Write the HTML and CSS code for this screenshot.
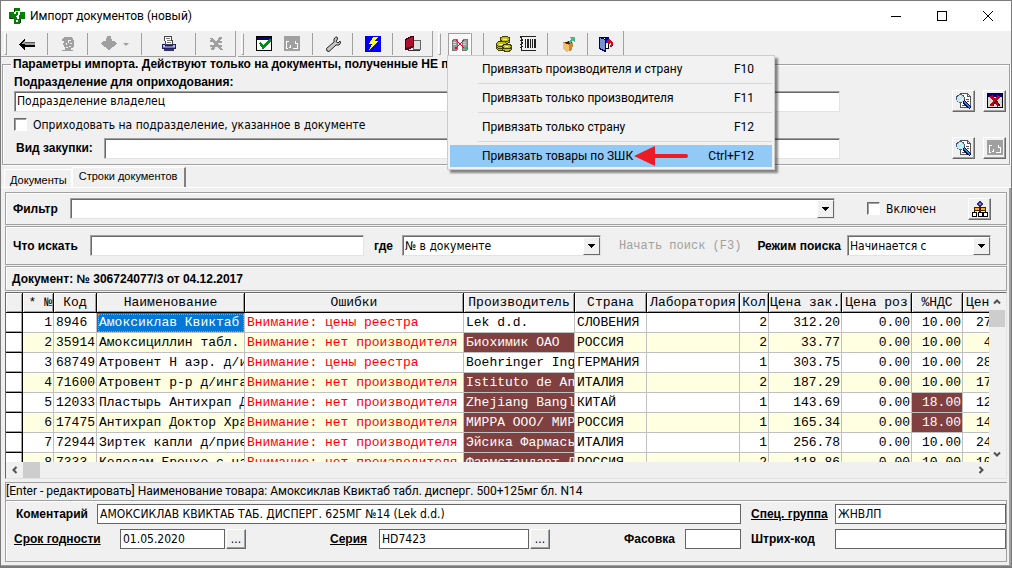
FILE: index.html
```html
<!DOCTYPE html>
<html lang="ru">
<head>
<meta charset="utf-8">
<title>Импорт документов (новый)</title>
<link rel="stylesheet" href="styles.css">
</head>
<body>
<svg class="sprite" aria-hidden="true">
  <symbol id="i-gray" viewBox="0 0 16 16"><path fill="#a0a0a0" d="M0 0h16v15H0z"/><path fill="#fff" d="M2 5h1v7h-1zM3 5h2v1h-2zM2 12h2v1h-2zM11 5h1v3h-1zM12 7h2v1h-2zM13 8h1v5h-1zM9 12h4v1h-4zM5 11h2v1h-2zM6 9h1v2h-1z"/></symbol>
  <symbol id="i-find" viewBox="0 0 16 16"><path fill="#fff" stroke="#555" d="M4.500.5h7l3 3v11h-10z"/><path stroke="#555" fill="none" d="M11.500.5v3h3M10 6.500h3M11 8.500h2M6 12.500h3"/><circle cx="4.500" cy="5.500" r="4" fill="#b8ecf4" stroke="#557"/><path stroke="#fff" d="M3 5l2-2M4 8l3-3"/><path stroke="#000050" stroke-width="3.400" d="M7.500 8.500l7 6.500"/><path stroke="#1c8ce0" stroke-width="1.600" d="M8 8.500l6 6"/></symbol>
</svg>
<div class="window">
  <header class="titlebar">
    <svg class="logo" viewBox="0 0 16 16"><path fill="#008000" d="M5 0h6v4h5v7h-5v5H5v-5H0V4h5z"/><path fill="none" stroke="#fff" stroke-width="1.200" d="M6 5.500V3.500h4v3L7.500 8.500h2V10H7.500M8 11.500v2"/><path stroke="#003000" d="M5 1v3M11 11v4M1 10.500h3"/></svg>
    <h1>Импорт документов (новый)</h1>
    <button class="cap" aria-label="Свернуть"><svg viewBox="0 0 10 10"><path d="M0 5.500h10"/></svg></button>
    <button class="cap" aria-label="Развернуть"><svg viewBox="0 0 10 10"><path d="M.5.5h9v9h-9z"/></svg></button>
    <button class="cap" aria-label="Закрыть"><svg class="smooth" viewBox="0 0 10 10"><path d="M0 0l10 10M10 0L0 10"/></svg></button>
  </header>

  <div class="toolbars">
    <div class="bar">
      <div class="seg"><button aria-label="Назад"><svg viewBox="0 0 16 16"><path fill="#a0a0a0" d="M0 8l6-5v3h10v4H6v3z"/><path fill="#000" d="M0 8l6-5v1L2 8h4v1h10v2H6v3L0 9z"/><path fill="#555" d="M6 6h10v1H6z"/></svg></button></div>
      <div class="seg"><button aria-label="Производитель"><svg viewBox="0 0 16 16"><path fill="#a0a0a0" d="M4 1h7l2 1 1 3v5l-2 2h-1v2h2v1H2v-1h3v-2L4 11V9H3V7h1V5H2V3z"/><path fill="#f0f0f0" d="M8 4h3v1H9v2H8zM10 7h2v1h-2zM6 7h1v2H6zM9 10h2v1H9zM6 11h2v1H6z"/></svg></button></div>
      <div class="seg wide"><button aria-label="Загрузить"><svg viewBox="0 0 16 16"><path fill="#a0a0a0" d="M6 0h4l1 5h3l2 3-4 3-2 1-2 3-2-3-2-1-4-3 2-3h3z"/></svg></button><button class="drop" aria-label="Варианты загрузки"></button></div>
      <div class="seg wide"><button aria-label="Печать"><svg viewBox="0 0 16 16"><path fill="#fff" stroke="#444" d="M3.500.5h7l1 8h-7z"/><path stroke="#777" d="M5 2.500h4M6 4.500h4M6 6.500h4"/><path fill="#7878c8" stroke="#202060" d="M1.500 8.500h2l1 1h7l1-1h2v4h-13z"/><path fill="#c0c0f0" d="M2 9h2v2h8V9h2v2H2z"/><path fill="#30307a" d="M3 13h10v2H3z"/></svg></button></div>
      <div class="seg"><button aria-label="Удалить"><svg viewBox="0 0 16 16"><path stroke="#a0a0a0" stroke-width="2.600" d="M3 2l11 12M13 1L4 14"/><path stroke="#a0a0a0" stroke-width="1.500" d="M2 5h3M11 6h3M2 10h12"/></svg></button></div>
    </div>
    <div class="bar">
      <div class="seg pair"><button aria-label="Отметить"><svg viewBox="0 0 16 16"><path fill="#fff" stroke="#000" d="M.5.5h15v14H.5z"/><path fill="#000080" d="M1 1h14v3H1z"/><path fill="#008a1c" d="M3 7l2-1 2 3 6-6h2v2L7 14z"/></svg></button><button aria-label="Снять отметку"><svg><use href="#i-gray"/></svg></button></div>
      <div class="seg"><button aria-label="Настройка"><svg class="smooth" viewBox="0 0 16 16"><path fill="#c8c8c8" stroke="#222" d="M10.500 1.200L9 3v3l-7.500 6.500.5 2.500 2 .5L11 9h3l1.500-2-.5-2-2 2-2-1.500L12.500 3l-.5-2z"/></svg></button></div>
      <div class="seg"><button aria-label="Выполнить"><svg viewBox="0 0 16 16"><path fill="#0000f0" d="M0 0h16v16H0z"/><path fill="#ffff20" d="M8 1h5l-3 4h4l-10 9 3-6H4z"/></svg></button></div>
      <div class="seg"><button aria-label="Справочник"><svg viewBox="0 0 16 16"><path fill="#e0e0e0" stroke="#666" d="M8.500 4.500h7v9h-7z"/><path fill="#b01030" stroke="#400010" d="M.5 3.500l6-3h2v10l-6 3h-2z"/><path fill="#600018" d="M1 12l8-3v2l-6 3H1z"/><path fill="#333" d="M3 14h12v1H3z"/></svg></button></div>
    </div>
    <div class="bar">
      <div class="seg tight">
        <button class="pressed" aria-label="Привязать" aria-haspopup="menu" aria-expanded="true"><svg viewBox="0 0 16 16"><path fill="#989898" stroke="#777" d="M.5 4.500l2-1h3v10l-1 1h-4zM10.500 4.500l2-1h3v10l-1 1h-4z"/><path fill="#d8d8d8" d="M1 6h3v1H1zM11 6h3v1h-3zM1 8h3v1H1zM11 8h3v1h-3z"/><path stroke="#f00020" stroke-width="1.400" d="M4 4l8 8M12 4l-8 8"/><path fill="#f00020" d="M3 11h2v2H3z"/><path fill="#0c4" d="M13 11h2v2h-2z"/></svg></button>
        <div class="menu" role="menu">
          <button role="menuitem"><span>Привязать производителя и страну</span><kbd>F10</kbd></button>
          <hr>
          <button role="menuitem"><span>Привязать только производителя</span><kbd>F11</kbd></button>
          <hr>
          <button role="menuitem"><span>Привязать только страну</span><kbd>F12</kbd></button>
          <hr>
          <button role="menuitem" class="hot"><span>Привязать товары по ЗШК</span><kbd>Ctrl+F12</kbd><svg class="pointer" viewBox="0 0 54 20"><path fill="#ed1c24" d="M0 10L21 0v8h31a2 2 0 010 4H21v8z"/></svg></button>
        </div>
      </div>
      <div class="seg spacer"></div>
      <div class="seg pair"><button aria-label="Цены"><svg viewBox="0 0 16 16"><g fill="#c8c010" stroke="#404000"><ellipse cx="9" cy="5" rx="5" ry="2.500"/><ellipse cx="9" cy="3" rx="5" ry="2.500"/><ellipse cx="5.500" cy="12" rx="5" ry="2.500"/><ellipse cx="5.500" cy="10" rx="5" ry="2.500"/><ellipse cx="5.500" cy="8" rx="5" ry="2.500"/><ellipse cx="11" cy="13" rx="4.500" ry="2.300"/><ellipse cx="11" cy="10.500" rx="4.500" ry="2.300"/></g><path stroke="#ffff80" d="M7 3h4M3 8h4M9 10.500h3"/></svg></button><button aria-label="Штрих-коды"><svg viewBox="0 0 16 16"><path fill="#222" d="M0 0h16v1H2v2h1v2H2v1h1v2H2v2h1v1H2v3h14v1H1v-3H0v-1h1V9H0V8h1V5H0V4h1V2H0zM5 3h1v9H5zM7 3h2v9H7zM10 3h1v9h-1zM12 3h1v9h-1zM14 3h2v9h-2z"/></svg></button></div>
      <div class="seg"><button aria-label="Товары"><svg viewBox="0 0 16 16"><path fill="#c88838" d="M3 6l8-1 2 3-1 6-6 2-3-3z"/><path fill="#f0c070" d="M3 7l6 2v6l-3 1-3-4z"/><path fill="#402008" d="M4 6l7-1 1 2-5 1z"/><path fill="#48b888" d="M8 6l3-3-2-2h6v5l-2-1-3 2z"/></svg></button></div>
      <div class="seg slim"><button aria-label="Выход"><svg viewBox="0 0 16 16"><path fill="#fff" stroke="#000" d="M1.500 1.500h9v11h-9z"/><path fill="#7890d0" stroke="#000060" d="M1.500 1.500l6 2v12l-6-3z"/><path fill="#0000c0" d="M7 2h4v5H8z"/><path fill="#d00018" d="M8 6l3-4 1 2c3 1 4 4 2 7h-2l1-3-1-1-1 2z"/></svg></button></div>
    </div>
  </div>

  <fieldset class="params">
    <legend>Параметры импорта. Действуют только на документы, полученные НЕ п</legend>
    <label class="bold" for="unit">Подразделение для оприходования:</label>
    <div class="line">
      <input id="unit" class="sunk grow" value="Подразделение владелец">
      <div class="tools"><button class="raised" aria-label="Найти"><svg><use href="#i-find"/></svg></button><button class="raised" aria-label="Очистить"><svg viewBox="0 0 16 16"><path fill="#d8d8d8" stroke="#000" d="M.5.5h15v14H.5z"/><path fill="#000080" d="M1 1h14v3H1z"/><path stroke="#c00018" stroke-width="3" d="M4 3l8 10M12 3L4 13"/><path stroke="#500008" d="M9 7l4 6M6 13l3-5"/></svg></button></div>
    </div>
    <label class="check"><input type="checkbox">Оприходовать на подразделение, указанное в документе</label>
    <div class="line">
      <label class="bold kind" for="kind">Вид закупки:</label>
      <input id="kind" class="sunk grow">
      <div class="tools"><button class="raised" aria-label="Найти"><svg><use href="#i-find"/></svg></button><button class="raised" aria-label="Очистить" disabled><svg><use href="#i-gray"/></svg></button></div>
    </div>
  </fieldset>

  <div class="tabs" role="tablist">
    <button role="tab">Документы</button>
    <button role="tab" class="active" aria-selected="true">Строки документов</button>
  </div>

  <main class="page">
    <div class="panel filter">
      <label class="bold" for="filter">Фильтр</label>
      <span class="combo grow"><select id="filter" class="sunk"><option></option></select></span>
      <label class="check on"><input type="checkbox">Включен</label>
      <button class="raised" aria-label="Структура"><svg viewBox="0 0 16 16"><path fill="#7878e0" stroke="#303080" d="M8 .5L10.500 3 8 5.500 5.500 3z"/><path fill="#ffb020" stroke="#402000" d="M2.500 6.500h11v3h-11z"/><path fill="#402000" d="M7 5h2v6H7zM2 9h1v2H2zM13 9h1v2h-1z"/><path fill="#fff" stroke="#000" d="M.5 11.500h4v4h-4zM6 11.500h4v4H6zM11.500 11.500h4v4h-4z"/></svg></button>
    </div>
    <div class="panel search">
      <label class="bold what" for="what">Что искать</label>
      <input id="what" class="sunk grow">
      <label class="bold" for="where">где</label>
      <span class="combo by"><select id="where" class="sunk"><option>№ в документе</option></select></span>
      <button class="start" disabled>Начать поиск (F3)</button>
      <label class="bold" for="mode">Режим поиска</label>
      <span class="combo mode"><select id="mode" class="sunk"><option>Начинается с</option></select></span>
    </div>
    <div class="panel doc bold">Документ: № 306724077/3 от 04.12.2017</div>

    <div class="grid">
      <div class="view">
        <table>
          <colgroup><col class="c-ind"><col class="c-no"><col class="c-code"><col class="c-name"><col class="c-err"><col class="c-maker"><col class="c-country"><col class="c-lab"><col class="c-qty"><col class="c-buy"><col class="c-sell"><col class="c-vat"><col class="c-last"></colgroup>
          <thead><tr><th></th><th class="num">* №</th><th>Код</th><th>Наименование</th><th>Ошибки</th><th>Производитель</th><th>Страна</th><th>Лаборатория</th><th>Кол</th><th>Цена зак.</th><th>Цена роз</th><th>%НДС</th><th class="left">Цен</th></tr></thead>
          <tbody>
            <tr><td></td><td>1</td><td>8946</td><td class="sel">Амоксиклав Квиктаб</td><td>Внимание: цены реестра</td><td>Lek d.d.</td><td>СЛОВЕНИЯ</td><td></td><td>2</td><td>312.20</td><td>0.00</td><td>10.00</td><td>27</td></tr>
            <tr><td></td><td>2</td><td>35914</td><td>Амоксициллин табл.</td><td>Внимание: нет производителя</td><td class="bad">Биохимик ОАО</td><td>РОССИЯ</td><td></td><td>2</td><td>33.77</td><td>0.00</td><td>10.00</td><td> 4</td></tr>
            <tr><td></td><td>3</td><td>68749</td><td>Атровент Н аэр. д/и</td><td>Внимание: цены реестра</td><td>Boehringer Ing</td><td>ГЕРМАНИЯ</td><td></td><td>1</td><td>303.75</td><td>0.00</td><td>10.00</td><td>28</td></tr>
            <tr><td></td><td>4</td><td>71600</td><td>Атровент р-р д/инга</td><td>Внимание: нет производителя</td><td class="bad">Istituto de An</td><td>ИТАЛИЯ</td><td></td><td>2</td><td>187.29</td><td>0.00</td><td>10.00</td><td>17</td></tr>
            <tr><td></td><td>5</td><td>12033</td><td>Пластырь Антихрап Д</td><td>Внимание: нет производителя</td><td class="bad">Zhejiang Bangl</td><td>КИТАЙ</td><td></td><td>1</td><td>143.69</td><td>0.00</td><td class="bad">18.00</td><td>12</td></tr>
            <tr><td></td><td>6</td><td>17475</td><td>Антихрап Доктор Хра</td><td>Внимание: нет производителя</td><td class="bad">МИРРА ООО/ МИР</td><td>РОССИЯ</td><td></td><td>1</td><td>165.34</td><td>0.00</td><td class="bad">18.00</td><td>14</td></tr>
            <tr><td></td><td>7</td><td>72944</td><td>Зиртек капли д/прие</td><td>Внимание: нет производителя</td><td class="bad">Эйсика Фармась</td><td>ИТАЛИЯ</td><td></td><td>1</td><td>256.78</td><td>0.00</td><td>10.00</td><td>24</td></tr>
            <tr><td></td><td>8</td><td>7333</td><td>Колодам Бронхо с ча</td><td>Внимание: нет производителя</td><td class="bad">Фармстандарт Л</td><td>РОССИЯ</td><td></td><td>2</td><td>118.86</td><td>0.00</td><td>10.00</td><td>10</td></tr>
          </tbody>
        </table>
      </div>
      <div class="vscroll"><button aria-label="Вверх"><svg viewBox="0 0 8 8"><path d="M1 5.500L4 2.500l3 3"/></svg></button><div class="thumb"></div><button aria-label="Вниз"><svg viewBox="0 0 8 8"><path d="M1 2.500l3 3 3-3"/></svg></button></div>
      <div class="hscroll"><button aria-label="Влево"><svg viewBox="0 0 8 8"><path d="M5.500 1l-3 3 3 3"/></svg></button><div class="thumb"></div><button aria-label="Вправо"><svg viewBox="0 0 8 8"><path d="M2.500 1l3 3-3 3"/></svg></button></div>
    </div>

    <div class="status">[Enter - редактировать] Наименование товара: Амоксиклав Квиктаб табл. дисперг. 500+125мг бл. N14</div>

    <div class="details">
      <div class="row">
        <label class="bold l-note" for="note">Коментарий</label><input id="note" class="flat grow" value="АМОКСИКЛАВ КВИКТАБ ТАБ. ДИСПЕРГ. 625МГ №14 (Lek d.d.)">
      </div>
      <div class="row"><a class="bold side" href="#group">Спец. группа</a><input id="group" aria-label="Спец. группа" class="flat grow" value="ЖНВЛП"></div>
      <div class="row">
        <a class="bold l-date" href="#date">Срок годности</a><input id="date" aria-label="Срок годности" class="flat w-date" value="01.05.2020"><button class="raised dots" aria-label="Выбрать дату">...</button>
        <a class="bold l-serial" href="#serial">Серия</a><input id="serial" aria-label="Серия" class="flat w-serial" value="HD7423"><button class="raised dots" aria-label="Выбрать серию">...</button>
        <label class="bold l-pack" for="pack">Фасовка</label><input id="pack" class="flat w-pack">
      </div>
      <div class="row"><label class="bold side" for="bar">Штрих-код</label><input id="bar" class="flat grow"></div>
    </div>
  </main>
</div>
</body>
</html>
```
FILE: styles.css
```css
*, *::before, *::after { box-sizing: border-box; }
body { margin: 0; background: #f0f0f0; color: #000; font: 12px/16px "DejaVu Sans Condensed", "Noto Sans", sans-serif; }
button, input, select { font: inherit; color: inherit; margin: 0; padding: 0; border: 0; border-radius: 0; background: none; outline: 0; }
svg { display: block; width: 16px; height: 16px; fill: none; shape-rendering: crispEdges; }
svg.smooth { shape-rendering: auto; }
.sprite { display: none; }
.bold { font: bold 12px/16px "Liberation Sans", sans-serif; white-space: nowrap; }
.grow { flex: 1; min-width: 0; }
a { color: inherit; }

.window { display: flex; flex-direction: column; height: 100vh; border: 1px solid #7a7a7a; border-bottom-width: 2px; overflow: hidden; }
.titlebar { display: flex; align-items: center; height: 30px; flex: none; padding-left: 8px; background: #fff; }
.titlebar h1 { flex: 1; margin: 0 0 0 5px; font: 12px/16px Roboto, sans-serif; }
.cap { width: 46px; height: 28px; display: grid; place-items: center; }
.cap svg { width: 10px; height: 10px; stroke: #000; }

.toolbars { display: flex; flex: none; height: 26px; }
.bar { display: flex; padding: 2px 0 1px 3px; border-right: 1px solid #a0a0a0; border-bottom: 1px solid #a0a0a0; margin-right: 2px; }
.bar::before { content: ""; width: 3px; border: 1px solid; border-color: #fff #a0a0a0 #a0a0a0 #fff; }
.bar:last-child { border-bottom-color: transparent; }
.seg { display: flex; align-items: center; justify-content: center; width: 40px; }
.seg + .seg { border-left: 1px solid #a0a0a0; }
.seg.wide { width: 54px; }
.seg.pair { width: 68px; gap: 12px; }
.bar:last-child .pair { width: 64px; gap: 8px; }
.seg.tight { position: relative; width: 30px; justify-content: flex-end; }
.seg.spacer { width: 12px; }
.seg.slim { width: 36px; }
.drop { margin-left: 6px; border: 3px solid transparent; border-top-color: #a0a0a0; border-bottom: 0; }
.pressed { width: 23px; height: 23px; display: grid; place-items: center; background: #f8f8f8; border: 1px solid; border-color: #a0a0a0 #fff #fff #a0a0a0; }

.menu { position: absolute; z-index: 2; top: 22px; left: 6px; width: 328px; padding: 2px; background: #f2f2f2; border: 1px solid #ccc; box-shadow: 3px 3px 2px rgba(0, 0, 0, .45); }
.menu button { position: relative; display: flex; justify-content: space-between; align-items: center; width: 100%; height: 22px; padding: 0 18px 0 32px; font: 12px/16px Roboto, sans-serif; white-space: nowrap; }
.menu kbd { font: inherit; }
.menu hr { margin: 3px 0 3px 28px; border: 0; height: 1px; background: #d7d7d7; }
.menu .hot { background: #91c9f7; }
.pointer { position: absolute; left: 184px; top: 1px; width: 54px; height: 20px; shape-rendering: auto; }

.params { flex: none; margin: 0 1px 0 1px; padding: 3px 3px 5px 11px; min-width: 0; border: 1px solid #a0a0a0; box-shadow: inset 1px 1px #fff, 1px 1px #fff; display: flex; flex-direction: column; }
.params legend { font: bold 12px/14px "Liberation Sans", sans-serif; margin-left: -3px; padding: 0 2px; white-space: nowrap; }
.line { display: flex; align-items: center; }
.sunk { height: 21px; padding: 0 2px; background: #fff; border: 1px solid; border-color: #a0a0a0 #e3e3e3 #e3e3e3 #a0a0a0; box-shadow: inset 1px 1px #696969; }
.raised { display: grid; place-items: center; width: 23px; height: 22px; background: #f0f0f0; border: 1px solid; border-color: #fff #696969 #696969 #fff; box-shadow: inset -1px -1px #a0a0a0; }
.tools { display: flex; gap: 8px; margin-left: 112px; }
.check { display: flex; align-items: center; gap: 6px; height: 25px; }
.check input { appearance: none; width: 13px; height: 13px; background: #fff; border: 1px solid; border-color: #696969 #fff #fff #696969; box-shadow: inset 1px 1px #a0a0a0; }
.kind { width: 90px; padding-left: 2px; }

.tabs { display: flex; align-items: flex-end; flex: none; height: 23px; padding: 2px 0 0 3px; border-bottom: 1px solid #fff; }
.tabs button { height: 18px; padding: 2px 4px 0 5px; font: 11px/14px "Liberation Sans", sans-serif; border: 1px solid #fff; border-bottom: 0; white-space: nowrap; }
.tabs .active { height: 20px; padding: 0 7px 3px 6px; border-right: 2px solid #808080; }

.page { flex: 1; min-height: 0; display: flex; flex-direction: column; padding: 4px 2px 3px 4px; border-right: 2px solid #a0a0a0; border-bottom: 1px solid #a0a0a0; }
.panel { flex: none; display: flex; align-items: center; border: 1px solid #a0a0a0; box-shadow: inset 1px 1px #fff; margin-bottom: 1px; padding: 0 15px 0 7px; }
.filter { height: 33px; gap: 12px; }
.search { height: 39px; gap: 10px; }
.doc { height: 25px; padding-left: 6px; }
.combo { position: relative; display: flex; }
.combo select { width: 100%; appearance: none; }
.combo::after { content: ""; position: absolute; right: 1px; top: 2px; width: 17px; height: 18px; border: 1px solid; border-color: #fff #696969 #696969 #fff; background: linear-gradient(#000, #000) 4px 6px / 7px 1px no-repeat, linear-gradient(#000, #000) 5px 7px / 5px 1px no-repeat, linear-gradient(#000, #000) 6px 8px / 3px 1px no-repeat, linear-gradient(#000, #000) 7px 9px / 1px 1px no-repeat, #f0f0f0; pointer-events: none; }
.on { margin: 0 20px; }
.what { width: 67px; }
.by { width: 199px; margin-left: -1px; }
.mode { width: 144px; margin-left: -4px; }
.start { margin: 0 6px 0 8px; font: 12px/16px "Liberation Mono", monospace; color: #a0a0a0; white-space: nowrap; }

.grid { flex: 1; min-height: 0; display: grid; grid-template: minmax(0, 1fr) 16px / minmax(0, 1fr) 17px; border: 1px solid; border-color: #696969 #e3e3e3 #e3e3e3 #696969; }
.view { overflow: hidden; background: #fff; }
table { table-layout: fixed; width: 1041px; border-spacing: 0; font: 13px/17px "Liberation Mono", monospace; }
.c-ind { width: 17px; } .c-no { width: 31px; } .c-code { width: 43px; } .c-name { width: 148px; } .c-err { width: 219px; }
.c-maker { width: 111px; } .c-country { width: 72px; } .c-lab { width: 93px; } .c-qty { width: 29px; } .c-buy { width: 73px; }
.c-sell { width: 70px; } .c-vat { width: 51px; } .c-last { width: 84px; }
th, td { height: 20px; padding: 0 2px; white-space: pre; overflow: hidden; border: 0 solid #c0c0c0; border-width: 0 1px 1px 0; text-align: left; font-weight: normal; }
th { padding: 0 1px; text-align: center; background: #f0f0f0; border-color: #000; box-shadow: inset 1px 1px #fff, inset -1px -1px #a0a0a0; }
th.num { text-align: right; }
th.left { text-align: left; padding-left: 3px; }
tbody tr:nth-child(even) td { background: #ffffe1; }
tbody tr td:first-child { background: #fff; border-color: #000; box-shadow: inset -1px -1px #a0a0a0; }
td:nth-child(2), td:nth-child(9), td:nth-child(10), td:nth-child(11), td:nth-child(12) { text-align: right; padding-right: 1px; }
td:nth-child(5) { color: #f00; }
td:nth-child(13) { padding-left: 13px; }
tbody tr td.bad { background: #804040; color: #fff; }
td.sel { background: #0078d7; color: #fff; outline: 1px dotted #ff8728; outline-offset: -2px; }
.vscroll { display: flex; flex-direction: column; }
.vscroll button, .hscroll button { display: grid; place-items: center; width: 16px; height: 17px; }
.vscroll svg, .hscroll svg { width: 8px; height: 8px; stroke: #505050; stroke-width: 2; shape-rendering: auto; }
.vscroll .thumb { width: 16px; height: 17px; margin-bottom: auto; background: #cdcdcd; }
.hscroll { display: flex; }
.hscroll button { height: 16px; width: 17px; }
.hscroll .thumb { width: 17px; margin-right: auto; background: #cdcdcd; }

.status { flex: none; height: 18px; margin-top: 3px; border-top: 1px solid #a0a0a0; border-left: 1px solid #a0a0a0; font: 12px/16px Roboto, sans-serif; white-space: nowrap; overflow: hidden; }
.details { flex: none; display: grid; grid-template-columns: minmax(0, 1fr) 255px; column-gap: 10px; row-gap: 4px; align-content: start; height: 62px; padding: 2px 0 0 8px; border: 1px solid #a0a0a0; box-shadow: inset 1px 1px #fff; overflow: hidden; }
.row { display: flex; align-items: center; height: 21px; }
.flat { height: 20px; padding: 0 2px; background: #fff; border: 1px solid #646464; }
.l-note { width: 83px; padding-left: 2px; }
.side { width: 84px; }
.l-date { width: 106px; }
.w-date { width: 105px; }
.w-serial { width: 150px; }
.w-pack { width: 56px; }
.dots { width: 20px; height: 20px; margin-left: 1px; }
.l-serial { margin-left: auto; width: 49px; }
.l-pack { margin-left: 74px; width: 61px; }
```
